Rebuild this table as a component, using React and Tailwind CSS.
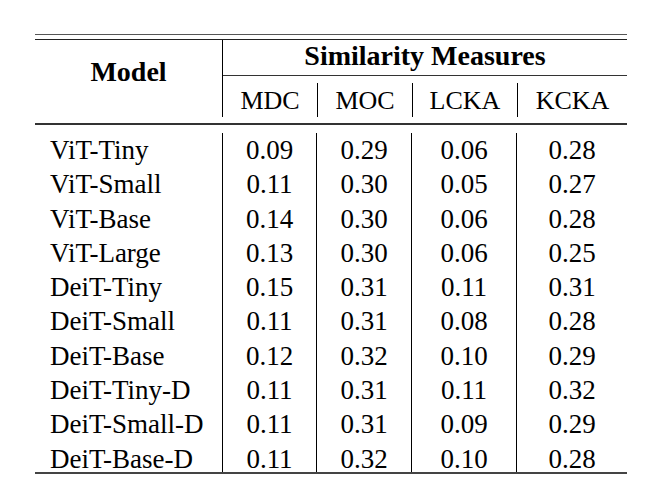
const rows = [
    ['ViT-Tiny', '0.09', '0.29', '0.06', '0.28'],
    ['ViT-Small', '0.11', '0.30', '0.05', '0.27'],
    ['ViT-Base', '0.14', '0.30', '0.06', '0.28'],
    ['ViT-Large', '0.13', '0.30', '0.06', '0.25'],
    ['DeiT-Tiny', '0.15', '0.31', '0.11', '0.31'],
    ['DeiT-Small', '0.11', '0.31', '0.08', '0.28'],
    ['DeiT-Base', '0.12', '0.32', '0.10', '0.29'],
    ['DeiT-Tiny-D', '0.11', '0.31', '0.11', '0.32'],
    ['DeiT-Small-D', '0.11', '0.31', '0.09', '0.29'],
    ['DeiT-Base-D', '0.11', '0.32', '0.10', '0.28'],
];

const App = () => {
    return (
        <div className="w-[669px] h-[482px] bg-white text-black pt-[34px] pl-[35px] font-['Liberation_Serif']">
            <div className="w-[592px]">
                {/* Top double rule */}
                <div className="h-px bg-[#555]" />
                <div className="h-[4px]" />
                <div className="h-px bg-[#222]" />

                {/* Header */}
                <div className="flex">
                    <div className="w-[188px] h-[77px] border-r border-black flex justify-center pt-[15px]">
                        <span className="text-[28px] font-bold leading-[34px]">Model</span>
                    </div>
                    <div className="w-[404px]">
                        <div className="h-[35px] flex items-center justify-center">
                            <span className="text-[28px] font-bold leading-[34px] -mt-[4px]">Similarity Measures</span>
                        </div>
                        <div className="h-px bg-[#333]" />
                        <div className="flex pt-[7px] text-[26px]">
                            <div className="w-[94px] h-[34px] flex items-center justify-center">MDC</div>
                            <div className="w-[95px] h-[34px] flex items-center justify-center border-l border-black">MOC</div>
                            <div className="w-[105px] h-[34px] flex items-center justify-center border-l border-black">LCKA</div>
                            <div className="w-[110px] h-[34px] flex items-center justify-center border-l border-black">KCKA</div>
                        </div>
                    </div>
                </div>

                <div className="h-[6px]" />
                <div className="h-[2px] bg-[#333]" />
                <div className="h-[8px]" />

                {/* Body */}
                <div className="text-[27px]">
                    {rows.map((r, i) => (
                        <div
                            key={r[0]}
                            className={`flex ${i === rows.length - 1 ? 'h-[30px]' : 'h-[34.3px]'}`}
                        >
                            <div className="w-[188px] pl-[15px] leading-[34.3px] border-r border-black">{r[0]}</div>
                            <div className="w-[94px] text-center leading-[34.3px] border-r border-black">{r[1]}</div>
                            <div className="w-[95px] text-center leading-[34.3px] border-r border-black">{r[2]}</div>
                            <div className="w-[105px] text-center leading-[34.3px] border-r border-black">{r[3]}</div>
                            <div className="w-[110px] text-center leading-[34.3px]">{r[4]}</div>
                        </div>
                    ))}
                </div>

                {/* Bottom rule */}
                <div className="h-[2px] bg-[#444]" />
            </div>
        </div>
    );
};

export default App;
